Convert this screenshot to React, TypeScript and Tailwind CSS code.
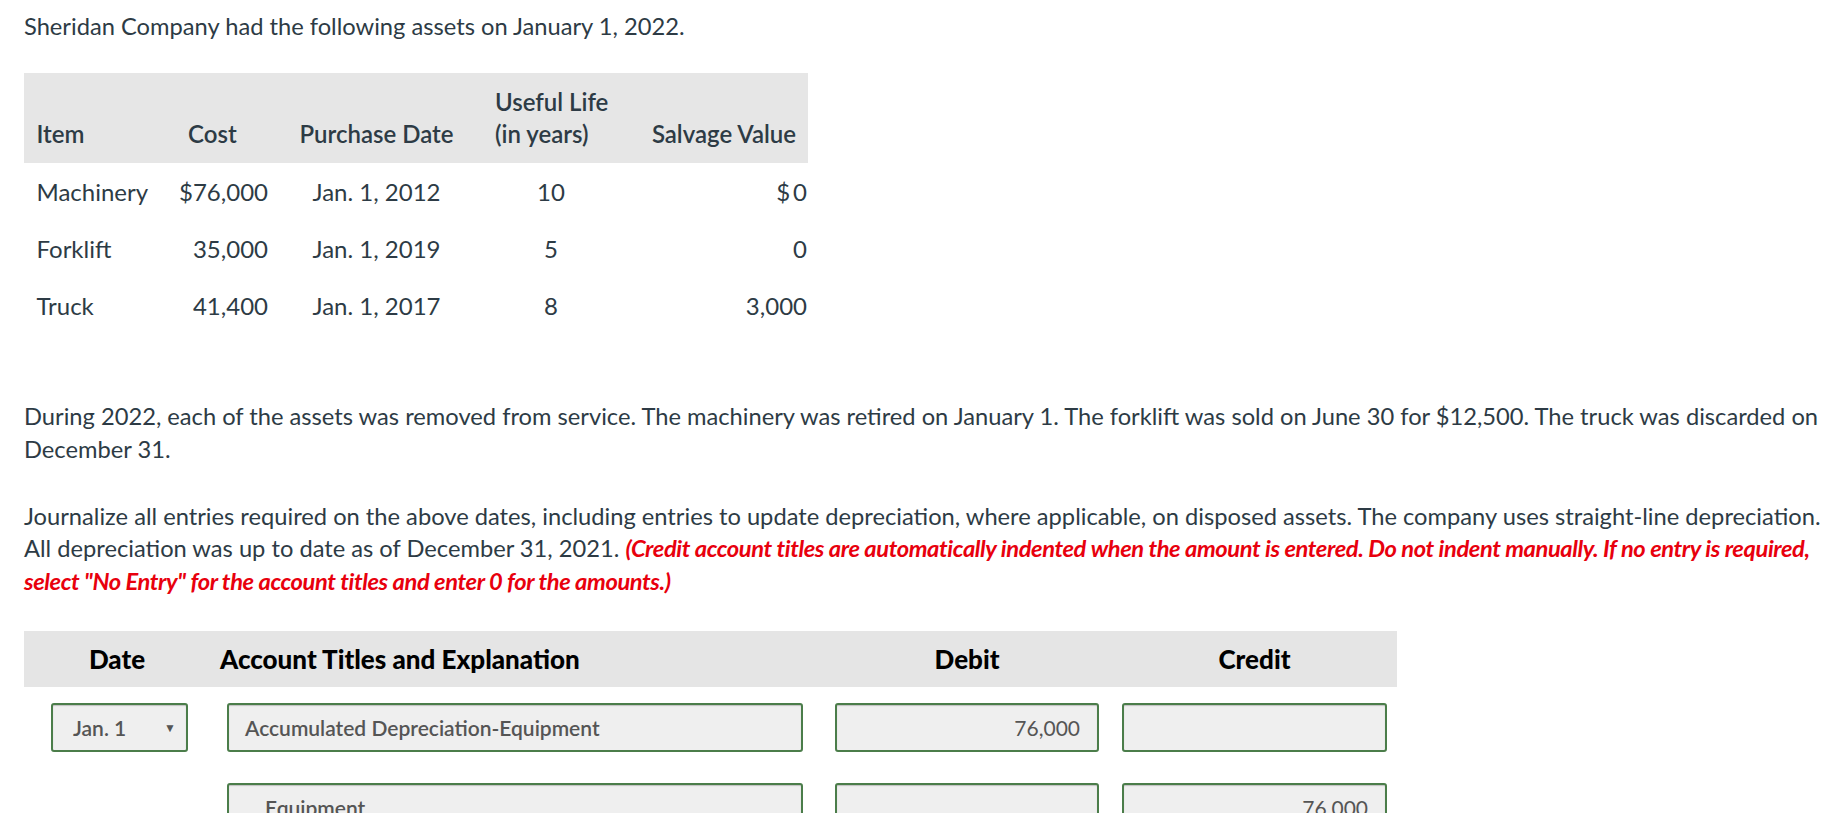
const assets = [
  { item: "Machinery", cost: "$76,000", date: "Jan. 1, 2012", life: "10", salvage: "$\u20090" },
  { item: "Forklift", cost: "35,000", date: "Jan. 1, 2019", life: "5", salvage: "0" },
  { item: "Truck", cost: "41,400", date: "Jan. 1, 2017", life: "8", salvage: "3,000" },
]

const box =
  "h-[49px] rounded-[3px] border-2 border-[#4b7d4a] bg-[#efefef] shadow-[inset_0_1px_1px_rgba(0,0,0,0.2)] flex items-center text-[#555] text-[21px]"

function AssetTable() {
  return (
    <div className="mt-[31px] w-[784px] text-[24px]">
      <div className="flex items-end bg-[#e6e6e6] py-[12.5px] font-semibold">
        <div className="w-[139px] pl-[12.5px]">Item</div>
        <div className="w-[121px] pl-[25px]">Cost</div>
        <div className="w-[185px] text-center">Purchase Date</div>
        <div className="w-[164px] pl-[26px]">
          Useful Life
          <br />
          (in years)
        </div>
        <div className="w-[175px] pr-[12px] text-right">Salvage Value</div>
      </div>
      {assets.map((a) => (
        <div key={a.item} className="flex py-[12.3px]">
          <div className="w-[139px] pl-[12.5px]">{a.item}</div>
          <div className="w-[121px] pr-[16px] text-right">{a.cost}</div>
          <div className="w-[185px] text-center">{a.date}</div>
          <div className="w-[164px] text-center">{a.life}</div>
          <div className="w-[175px] pr-[1px] text-right">{a.salvage}</div>
        </div>
      ))}
    </div>
  )
}

function JournalTable() {
  return (
    <div className="mt-[34px] w-[1373px]">
      <div className="flex h-[56px] items-center bg-[#e5e5e5] text-[26px] font-black text-black">
        <div className="w-[186px] text-center">Date</div>
        <div className="w-[608px] pl-[10px]">Account Titles and Explanation</div>
        <div className="w-[292px] pl-[17px]">
          <div className="w-[264px] text-center">Debit</div>
        </div>
        <div className="w-[287px] pl-[12px]">
          <div className="w-[265px] text-center">Credit</div>
        </div>
      </div>

      <div className="mt-[16px] flex">
        <div className="w-[186px] pl-[27px]">
          <div className={`${box} w-[137px] justify-between pl-[20px] pr-[10px] font-semibold`}>
            <span>Jan. 1</span>
            <span className="text-[12px] leading-none">▼</span>
          </div>
        </div>
        <div className="w-[608px] pl-[17px]">
          <div className={`${box} w-[576px] pl-[16px] font-semibold`}>
            Accumulated Depreciation-Equipment
          </div>
        </div>
        <div className="w-[292px] pl-[17px]">
          <div className={`${box} w-[264px] justify-end pr-[17px]`}>76,000</div>
        </div>
        <div className="w-[287px] pl-[12px]">
          <div className={`${box} w-[265px]`}></div>
        </div>
      </div>

      <div className="mt-[31px] flex">
        <div className="w-[186px]"></div>
        <div className="w-[608px] pl-[17px]">
          <div className={`${box} w-[576px] pl-[36px] font-semibold`}>Equipment</div>
        </div>
        <div className="w-[292px] pl-[17px]">
          <div className={`${box} w-[264px]`}></div>
        </div>
        <div className="w-[287px] pl-[12px]">
          <div className={`${box} w-[265px] justify-end pr-[17px]`}>76,000</div>
        </div>
      </div>
    </div>
  )
}

export default function App() {
  return (
    <div className="h-[813px] overflow-hidden bg-white pl-[24px] pr-[6px] pt-[10px] font-['Lato',sans-serif] text-[23.7px] leading-[32.4px] text-[#2d3b45]">
      <p>Sheridan Company had the following assets on January 1, 2022.</p>

      <AssetTable />

      <p className="mt-[66px]">
        During 2022, each of the assets was removed from service. The machinery was retired on
        January 1. The forklift was sold on June 30 for $12,500. The truck was discarded on
        December 31.
      </p>

      <p className="mt-[35px]">
        Journalize all entries required on the above dates, including entries to update
        depreciation, where applicable, on disposed assets. The company uses straight-line
        depreciation. All depreciation was up to date as of December 31, 2021.{" "}
        <strong className="font-bold italic tracking-[-0.4px] text-[#e8000d]">
          (Credit account titles are automatically indented when the amount is entered. Do not
          indent manually. If no entry is required, select "No Entry" for the account titles and
          enter 0 for the amounts.)
        </strong>
      </p>

      <JournalTable />
    </div>
  )
}
